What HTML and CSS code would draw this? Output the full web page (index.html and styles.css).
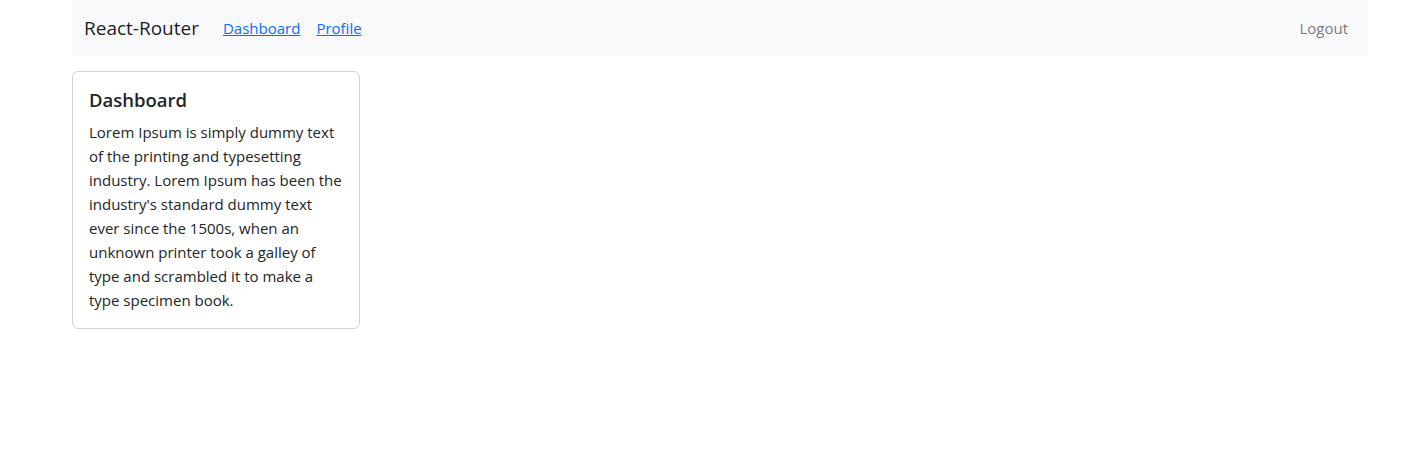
FILE: index.html
```html
<!DOCTYPE html>
<html lang="en">
<head>
  <meta charset="UTF-8">
  <title>React-Router</title>
  <link rel="stylesheet" href="styles.css">
</head>
<body>
  <div class="container">
    <nav class="navbar">
      <a class="brand" href="#">React-Router</a>
      <div class="nav-links">
        <a class="nav-link" href="#">Dashboard</a>
        <a class="nav-link" href="#">Profile</a>
      </div>
      <a class="logout" href="#">Logout</a>
    </nav>

    <div class="card">
      <h5 class="card-title">Dashboard</h5>
      <p class="card-text">Lorem Ipsum is simply dummy text of the printing and typesetting industry. Lorem Ipsum has been the industry's standard dummy text ever since the 1500s, when an unknown printer took a galley of type and scrambled it to make a type specimen book.</p>
    </div>
  </div>
</body>
</html>
```

FILE: styles.css
```css
body { margin: 0; background: #fff; color: #212529; font-family: "Open Sans", "Noto Sans", sans-serif; font-size: 15px; line-height: 24px; }
.container { width: 1296px; margin-left: 72px; }
.navbar { display: flex; align-items: center; height: 55px; padding: 0 12px; background: #f8f9fa; }
.brand { font-size: 19px; color: rgba(0, 0, 0, .9); text-decoration: none; margin-right: 16px; }
.nav-links { display: flex; flex: 1; }
.nav-link { color: #0d6efd; text-decoration: underline; padding: 8px; }
.logout { color: rgba(0, 0, 0, .55); text-decoration: none; padding: 8px; }
.card { width: 254px; margin-top: 16px; padding: 16px; border: 1px solid rgba(0, 0, 0, .175); border-radius: 6px; }
.card-title { margin: 0 0 8px; font-size: 18.5px; font-weight: 600; line-height: 24px; }
.card-text { margin: 0; }
```
